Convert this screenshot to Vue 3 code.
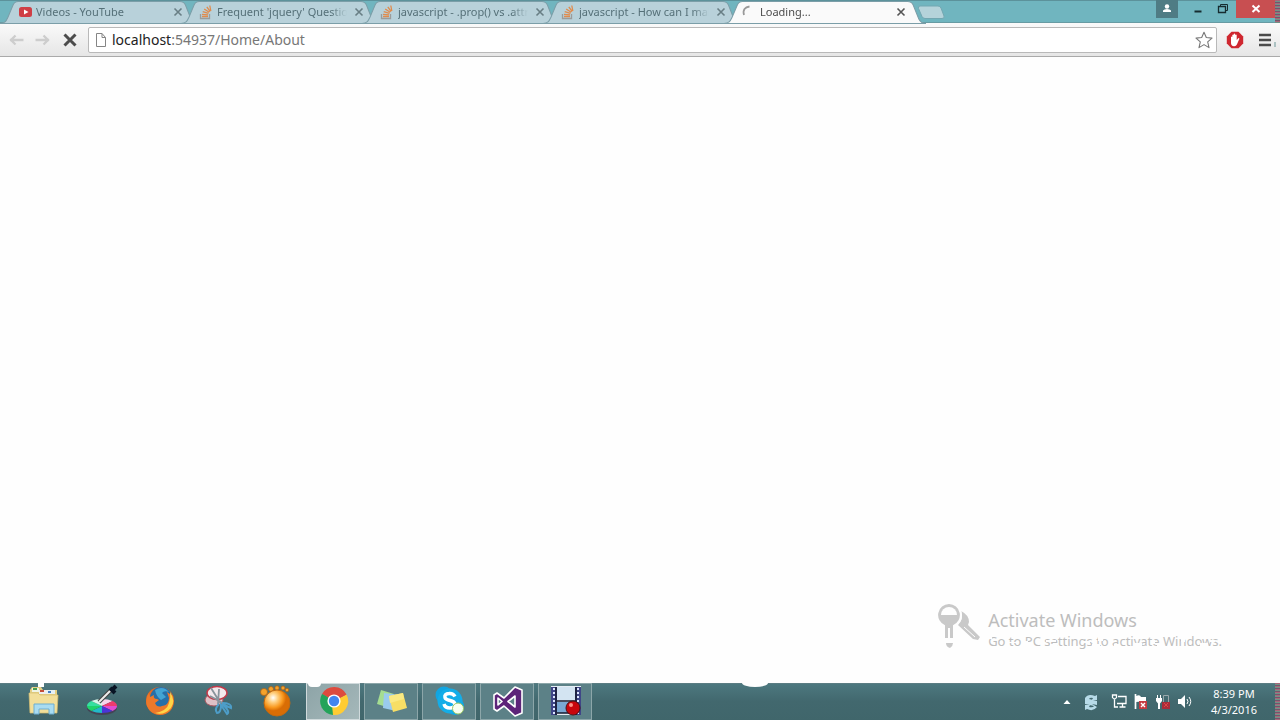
<script setup>
const tabs = [
  { title: 'Videos - YouTube', icon: 'youtube' },
  { title: "Frequent 'jquery' Question", icon: 'stack' },
  { title: 'javascript - .prop() vs .attr', icon: 'stack' },
  { title: 'javascript - How can I mal', icon: 'stack' },
  { title: 'Loading...', icon: 'spinner', active: true }
]
const colors = ['#f0f', '#00f', '#0af', '#0f8', '#6e0', '#fff', '#ffd0e0', '#f33']
const hues = ['#e04bd0', '#4a35d8', '#22b9c9', '#1fd36c', '#35e0a0', '#d8f7ea', '#f7d3ea', '#ee3b6d']
const wedges = colors.map((key, i) => {
  const a = (i * Math.PI) / 4
  const b = a + Math.PI / 4
  return { key, fill: hues[i], d: `M17 22L${17 + 15 * Math.cos(a)} ${22 + 7 * Math.sin(a)}A15 7 0 0 1 ${17 + 15 * Math.cos(b)} ${22 + 7 * Math.sin(b)}Z` }
})
</script>

<template>
  <div class="desktop">
    <header class="strip">
      <div class="tabs" role="tablist">
        <div v-for="t in tabs" :key="t.title" class="tab" :class="{ active: t.active }">
          <svg class="shape" viewBox="0 0 197 24" preserveAspectRatio="none" aria-hidden="true">
            <path d="M0 23.500C6 23 6 21 8 17L13 5Q14.500 1.500 18 1.500H179Q183 1.500 184.500 5L190 19Q192 23.500 197 23.500Z" />
          </svg>
          <button class="label" role="tab" :aria-selected="!!t.active">
            <svg v-if="t.icon === 'youtube'" width="16" height="16" viewBox="0 0 16 16">
              <rect x="2" y="3" width="13" height="10" rx="2.500" fill="#cf3f46" /><path d="M7 5.500v5L11.500 8z" fill="#fff" />
            </svg>
            <svg v-else-if="t.icon === 'stack'" width="16" height="16" viewBox="0 0 16 16" fill="none">
              <path d="M2.500 10v4.500h9V10" stroke="#9b9c9b" stroke-width="1.300" />
              <path d="M4 12.500h6M4 10.300l6 .6M4.700 7.700l5.800 1.600M6.200 5l5 3.200M8.800 2.800l3.400 4.700M11.800 1.500l1 5.500" stroke="#e08b4d" stroke-width="1.300" />
            </svg>
            <svg v-else width="16" height="16" viewBox="0 0 16 16" fill="none">
              <path d="M3 11C1.500 6 4 3 8.500 2.500" stroke="#999" stroke-width="1.800" />
            </svg>
            <span>{{ t.title }}</span>
          </button>
          <button class="close" aria-label="Close tab">
            <svg width="10" height="10" viewBox="0 0 10 10"><path d="M1.500 1.500l7 7M8.500 1.500l-7 7" /></svg>
          </button>
        </div>
        <button class="newtab" aria-label="New tab">
          <svg width="30" height="15" viewBox="0 0 30 15"><path d="M4 1h18q2 0 3 2l3 8q1 2.500-2 2.500H9q-2 0-3-2L2.500 3.500Q2 1 4 1z" fill="#b5d3da" stroke="#73a7b1" /></svg>
        </button>
      </div>
      <div class="window">
        <button class="user" aria-label="User">
          <svg width="22" height="17" viewBox="0 0 22 17" fill="#fff"><circle cx="11" cy="5.500" r="2.200" /><path d="M7 11V9.500Q8 8 11 8t4 1.500V11z" /></svg>
        </button>
        <button class="min" aria-label="Minimize"><svg width="10" height="17" viewBox="0 0 10 17"><path d="M1.500 10.500h7v2h-7z" fill="#172c30" /></svg></button>
        <button class="max" aria-label="Restore"><svg width="12" height="17" viewBox="0 0 12 17" fill="none" stroke="#172c30"><path d="M3.500 6V4.500h7v6H9" /><path d="M1.500 6.500h7v6h-7z" stroke-width="1.300" /></svg></button>
        <button class="exit" aria-label="Close"><svg width="10" height="10" viewBox="0 0 10 10"><path d="M1.500 1.500l7 6.500M8.500 1.500l-7 6.500" stroke="#fff" stroke-width="2" /></svg></button>
        <i class="edge"></i>
      </div>
    </header>

    <nav class="toolbar">
      <button aria-label="Back"><svg width="18" height="18" viewBox="0 0 18 18" fill="none" stroke="#cdcdcd" stroke-width="2.300"><path d="M16.500 9H3M8.500 4.500L4 9l4.500 4.500" /></svg></button>
      <button aria-label="Forward"><svg width="18" height="18" viewBox="0 0 18 18" fill="none" stroke="#cdcdcd" stroke-width="2.300"><path d="M1.500 9H15M9.500 4.500L14 9l-4.500 4.500" /></svg></button>
      <button aria-label="Stop"><svg width="18" height="18" viewBox="0 0 18 18" stroke="#4c4c4c" stroke-width="3"><path d="M3.500 3.500l11 11M14.500 3.500l-11 11" /></svg></button>
      <div class="address">
        <svg width="12" height="16" viewBox="0 0 12 16" fill="#fff" stroke="#858585"><path d="M1.500 1.500h5.500l3.500 4v9h-9zM7 1.500v4h3.500" /></svg>
        <a class="url" href="#"><b>localhost</b>:54937/Home/About</a>
        <button class="star" aria-label="Bookmark"><svg width="18" height="18" viewBox="0 0 18 18" fill="#fff" stroke="#777" stroke-width="1.100"><path d="M9 1.200l2.300 5.300 5.700.6-4.300 3.800 1.300 5.700L9 13.600l-5 3 1.300-5.700L1 7.100l5.700-.6z" stroke-linejoin="round" /></svg></button>
      </div>
      <button class="block" aria-label="Ad blocker"><svg width="18" height="18" viewBox="0 0 18 18"><path d="M5.500 .8h7l4.700 4.700v7l-4.700 4.700h-7L.8 12.500v-7z" fill="#cf2730" /><path d="M5 6q.8-1 1.300 0V4q.9-1 1.400 0V3q1-1 1.500 0v1q1-1 1.500 0v5l1.800-2q1.300 0 .7 1.300l-2.300 5.200q-1 2-3 1.700Q5 15 5 12z" fill="#fff" /></svg></button>
      <button class="menu" aria-label="Menu"><svg width="18" height="18" viewBox="0 0 18 18"><path d="M1 4h12M1 9h12M1 14h12" stroke="#4b4b4b" stroke-width="2.400" /><path d="M17 11v5" stroke="#6d9698" /></svg></button>
    </nav>

    <main class="page">
      <aside class="watermark">
        <svg width="44" height="48" viewBox="0 0 44 48" fill="#c9c9c9">
          <path d="M24 8q8 4 8 11l-1 3 12 12-2 3-5-1-15-14q6-6 3-14z" />
          <circle cx="12" cy="12" r="13" fill="#fefefe" />
          <path d="M12 1a11 11 0 0 1 4 21.200V35H13V25h-2v10H8V22.200A11 11 0 0 1 12 1z" />
          <path d="M4 12a8 8 0 0 1 16 0z" fill="#fefefe" />
          <path d="M27 24l11 10" stroke="#fefefe" />
          <path d="M9 40h7q0 3-3 5Q9 44 9 40z" />
        </svg>
        <div>
          <p class="big">Activate Windows</p>
          <p class="small">
            Go to PC settings to activate Windows.
            <svg class="wear" width="240" height="18" viewBox="0 0 240 18" fill="#fefefe" aria-hidden="true">
              <path d="M0 3h4v4H0zM20 10h10v1H20zM36 9h4v6h-4zM58 8h10v2H58zM62 12h7v2h-7zM95 9h7v2h-7zM104 12h8v3h-8zM110 5h5v4h-5zM121 8h4v3h-4zM126 12h5v3h-5zM146 11h8v4h-8zM163 8h4v4h-4zM169 12h5v3h-5zM193 4h4v6h-4zM212 11h8v3h-8zM222 8h5v2h-5z" />
            </svg>
          </p>
        </div>
      </aside>
    </main>

    <footer class="taskbar">
      <i class="notch n1"></i><i class="notch n2"></i><i class="notch n3"></i>
      <div class="apps">
        <button aria-label="File Explorer"><svg width="34" height="34" viewBox="0 0 34 34">
          <path d="M3 6l2-3h9l2 3h14v21H3z" fill="#e4cf83" /><path d="M5 4h7v4H5z" fill="#eef4e4" /><path d="M6 4h4v2H6z" fill="#4a9d4e" /><path d="M12 6h8v4h-8z" fill="#eee" /><path d="M13 6h4v2h-4z" fill="#c44d39" /><path d="M20 6h8v4h-8z" fill="#e6f0f5" /><path d="M21 7h3v2h-3z" fill="#477ec2" />
          <path d="M2 9h9l2 2h18l-1 18H3z" fill="#f2df9a" stroke="#d5bd70" stroke-width=".7" /><path d="M7 20h20v10h-5v-5H12v5H7z" fill="#a9dcf1" stroke="#6caed2" />
        </svg></button>
        <button aria-label="Color picker"><svg width="34" height="34" viewBox="0 0 34 34">
          <ellipse cx="17" cy="24" rx="15" ry="7" fill="#445" /><path v-for="w in wedges" :key="w.key" :d="w.d" :fill="w.fill" />
          <path d="M14 18L26 6" stroke="#444" stroke-width="4" /><path d="M14 18L26 6" stroke="#eee" stroke-width="2" /><path d="M25 4l5 5M27 6l4-4" stroke="#081424" stroke-width="4" />
        </svg></button>
        <button aria-label="Firefox"><svg width="34" height="34" viewBox="0 0 34 34">
          <circle cx="17" cy="17" r="14" fill="#e66a22" /><circle cx="18" cy="14" r="11" fill="#276fa8" /><path d="M12 6q8-5 14 2-5-2-7 1l4 4-5 3q-5-4-6-10z" fill="#43a4d4" />
          <path d="M30 13q2 13-8 17Q9 33 4 22q-2-7 2-13l1 4 4-2q-1 4 3 4l2 1-4 3q2 5 7 3 7-1 7-8l-2-6q5 3 6 5z" fill="#ed792a" /><path d="M27 8q6 9 1 16-7 8-16 5 12-2 14-10 2-6 1-11z" fill="#ffd447" />
        </svg></button>
        <button aria-label="Snipping Tool"><svg width="34" height="34" viewBox="0 0 34 34" fill="none">
          <ellipse cx="13" cy="16" rx="9" ry="6" fill="#dfc1c6" stroke="#ab5660" /><ellipse cx="16" cy="9" rx="10" ry="6.500" fill="#f2e9ec" stroke="#c23949" stroke-width="1.500" />
          <path d="M10 4l10 16M18 5l-1 15M9 12l13 7" stroke="#89949c" stroke-width="1.800" /><path d="M18 20q-5 5-2 9 4 0 4-8l6 9q4-2-5-10l9 4q1-5-9-5" stroke="#4d9dc8" stroke-width="2" />
        </svg></button>
        <button aria-label="GOM Player"><svg width="34" height="34" viewBox="0 0 34 34">
          <defs><radialGradient id="orange" cx=".35" cy=".3"><stop offset="0" stop-color="#fff" /><stop offset=".35" stop-color="#ffd184" /><stop offset=".75" stop-color="#f9981e" /><stop offset="1" stop-color="#d96d05" /></radialGradient></defs>
          <g fill="#f5a22b" stroke="#a65c12" stroke-width=".7"><circle cx="5" cy="8" r="3.500" /><circle cx="12" cy="5" r="2.500" /><circle cx="18" cy="4" r="2.200" /><circle cx="24" cy="4" r="2" /><circle cx="28" cy="6" r="1.800" /></g><circle cx="18" cy="19" r="13" fill="url(#orange)" stroke="#c26a10" />
        </svg></button>
        <button class="open current" aria-label="Chrome"><svg width="34" height="34" viewBox="0 0 34 34">
          <path d="M17 17L5 10A14 14 0 0 1 29.500 10.500z" fill="#dd4b3e" /><path d="M17 17L29.500 10.500A14 14 0 0 1 16 31z" fill="#fc3" /><path d="M17 17L16 31A14 14 0 0 1 5 10z" fill="#24a35a" /><path d="M17 10.500h12.500L17 17z" fill="#dd4b3e" /><path d="M5 10l6 10 6-3z" fill="#24a35a" /><path d="M22.500 20L16 31l-1-10z" fill="#fc3" /><circle cx="17" cy="17" r="6.600" fill="#fff" /><circle cx="17" cy="17" r="5.200" fill="#4385ef" />
        </svg></button>
        <button class="open" aria-label="Sticky Notes"><svg width="34" height="34" viewBox="0 0 34 34">
          <path d="M6 6l13 4-4 14-13-4z" fill="#a5dd91" /><path d="M9 9l15 2-3 16-13-3z" fill="#9acbed" /><path d="M14 12l14-3 4 15-14 4z" fill="#f7de65" /><path d="M14 12l14-3 1 6-14 4z" fill="#fae982" />
        </svg></button>
        <button class="open" aria-label="Skype"><svg width="34" height="34" viewBox="0 0 34 34">
          <circle cx="11" cy="11" r="8.500" fill="#12a5e1" /><circle cx="22" cy="22" r="9" fill="#12a5e1" /><circle cx="17" cy="17" r="12.500" fill="#14ade8" />
          <path d="M22 12.500Q20 9 16 9.500q-5 .5-4 4 .5 2 5 3t5 3.500q0 4-5 4-5 0-6-4" fill="none" stroke="#fff" stroke-width="3.500" /><circle cx="25" cy="24.500" r="5.500" fill="#f7fff1" stroke="#9ac765" />
        </svg></button>
        <button class="open" aria-label="Visual Studio"><svg width="34" height="34" viewBox="0 0 34 34">
          <path fill-rule="evenodd" d="M24 3l7 3v23l-7 3-11-10-7 5-3-2V11l3-2 7 5zM24 12l-7 5.500 7 5.500zM7 14v7l4-3.500z" fill="#5d2479" stroke="#fff" stroke-width="1.600" stroke-linejoin="round" />
        </svg></button>
        <button class="open" aria-label="Screen recorder"><svg width="34" height="34" viewBox="0 0 34 34">
          <path d="M2 2h30v29H2z" fill="#e5edf4" /><path d="M2 3h6v28H2zM26 3h6v28h-6z" fill="#3f4687" /><path d="M5 4v26M29 4v26" stroke="#dce5ff" stroke-width="2" stroke-dasharray="2 2" /><path d="M8 3h18v13H8z" fill="#d3e4f2" /><path d="M8 18h18v11H8z" fill="#7aa8d3" /><path d="M7 3v28M27 3v28M8 17h18M8 29h16" stroke="#15192e" stroke-width="1.500" /><circle cx="24" cy="24" r="7" fill="#c9060d" stroke="#4d1115" /><circle cx="22" cy="21" r="2" fill="#ff8f83" />
        </svg></button>
      </div>
      <div class="tray">
        <button class="up" aria-label="Show hidden icons"><svg width="8" height="6" viewBox="0 0 8 6"><path d="M4 1l3.500 4h-7z" fill="#fff" /></svg></button>
        <svg class="sync" width="16" height="18" viewBox="0 0 16 18"><path d="M2 5q3-5 10-2l2-1v5H9l1-2q-3-1-4 1l8 2v4L9 11l5 3q-4 5-10 2l-2 1v-5h5l-1 2q4 1 5-1L2 11z" fill="#b7dbe8" /></svg>
        <svg class="net" width="17" height="17" viewBox="0 0 17 17" fill="none" stroke="#fff" stroke-width="1.300"><path d="M7 3.500h8v7H6M8.500 14h6M11.500 11v3M3.500 6v8H7M1.500 2v2.500q2 3 4 0V2z" /></svg>
        <svg class="flag" width="17" height="17" viewBox="0 0 17 17"><path d="M2.500 1v15" stroke="#fff" stroke-width="1.700" /><path d="M3 3q4-2 5 1h5v6H8Q7 8 3 9z" fill="#fff" /><path d="M6 8h8v8H6z" fill="#c63a42" /><path d="M8 10l4 4m0-4l-4 4" stroke="#fff" stroke-width="1.400" /></svg>
        <svg class="power" width="17" height="17" viewBox="0 0 17 17"><path d="M8.500 2.500h5v12h-5z" fill="none" stroke="#9aa8ac" /><path d="M1 5h6v3L5 10.500V16H3v-5.500L1 8z" fill="#fff" /><path d="M2.500 2v3M5.500 2v3" stroke="#fff" /><path d="M7 9h8v7H7z" fill="#a72d3a" /><path d="M9 10l4 4m0-4l-4 4" stroke="#d44" /></svg>
        <svg class="vol" width="17" height="17" viewBox="0 0 17 17"><path d="M1 6h3l4-4v13l-4-4H1z" fill="#fff" /><path d="M10 6q2 2.500 0 5M12 4q3.500 4.500 0 9" fill="none" stroke="#fff" /></svg>
        <time class="clock" datetime="2016-04-03T20:39"><span>8:39 PM</span><span>4/3/2016</span></time>
        <i class="edge"></i>
      </div>
    </footer>
  </div>
</template>

<style>
html, body { margin: 0; }
</style>

<style scoped>
.desktop { min-height: 100vh; display: flex; flex-direction: column; background: #fefefe; font-family: "Noto Sans", "Open Sans", sans-serif; }
button { border: 0; padding: 0; margin: 0; background: none; font: inherit; color: inherit; display: flex; align-items: center; justify-content: center; }
svg { display: block; flex: none; }
.strip { height: 23px; display: flex; justify-content: space-between; background: #70b5bf; box-shadow: inset 0 1px #5c929b, inset 0 -1px #689ba3; }
.tabs { flex: 1; display: flex; min-width: 0; }
.tab { position: relative; flex: 0 1 181px; min-width: 0; display: flex; align-items: center; padding-left: 17px; box-sizing: border-box; font-size: 11px; color: #557078; }
.shape { position: absolute; left: 0; top: 0; width: calc(100% + 17px); height: 24px; z-index: 0; }
.shape path { fill: #b8d1da; stroke: #7b9ea8; }
.tab.active { color: #4c4c4c; flex-basis: 185px; padding-right: 3px; }
.tab.active .shape { z-index: 1; }
.tab.active .shape path { fill: #fafafa; }
.label { position: relative; z-index: 2; flex: 1; min-width: 0; justify-content: flex-start; gap: 3px; height: 22px; }
.label span { flex: 1; text-align: left; white-space: nowrap; overflow: hidden; mask-image: linear-gradient(to right, #000 calc(100% - 16px), transparent); }
.close { position: relative; z-index: 2; width: 10px; margin-left: 7px; margin-right: -2px; margin-top: 1px; }
.active .close { margin-right: 0; }
.close path { stroke: #687e85; stroke-width: 1.600; }
.active .close path { stroke: #555; }
.newtab { margin-left: 7px; padding-top: 2px; }
.window { display: flex; align-items: flex-start; }
.user { width: 22px; height: 18px; background: #4f7c84; margin-right: 15px; }
.min { width: 10px; margin-right: 14px; }
.max { width: 12px; margin-right: 7px; }
.exit { width: 40px; height: 18px; background: #c84f51; }
.window .edge { margin-left: -1px; }
.edge { width: 5px; align-self: stretch; background: repeating-linear-gradient(#a6667a 0 1px, #6f9386 1px 2px, #73566c 2px 3px); }
.toolbar { height: 34px; box-sizing: border-box; display: flex; align-items: center; gap: 9px; padding: 0 4px 0 7px; background: linear-gradient(#fafafa, #e6e6e6); border-bottom: 1px solid #aaa; }
.address { flex: 1; height: 26px; box-sizing: border-box; border: 1px solid #b9b9b9; border-radius: 2px; background: #fff; display: flex; align-items: center; padding: 0 3px 0 6px; }
.url { flex: 1; margin-left: 5px; color: #777; font-size: 14px; line-height: 20px; text-decoration: none; }
.url b { color: #222; font-weight: 400; }
.menu { margin-left: 5px; }
.page { flex: 1; display: flex; justify-content: flex-end; align-items: flex-end; padding: 0 58px 32px 0; }
.watermark { display: flex; gap: 7px; color: #bdbdbd; }
.watermark p { margin: 0; white-space: nowrap; }
.big { font-size: 18px; line-height: 24px; padding-top: 5px; }
.small { position: relative; font-size: 13px; line-height: 18px; }
.wear { position: absolute; left: 0; top: 0; }
.taskbar { position: relative; height: 37px; display: flex; justify-content: space-between; background: linear-gradient(#4d7980, #42686e 50%, #40666b); box-shadow: inset 0 1px #5b7d83; }
.apps { display: flex; gap: 4px; padding-left: 16px; }
.apps button { width: 54px; height: 37px; box-sizing: border-box; padding: 0 0 2px 1px; }
.apps .open { border: 1px solid #8ca6a9; background: #5c8187; }
.apps .current { background: linear-gradient(135deg, #8da4a7, #a5b8ba); border-color: #d0dadc; }
.notch { position: absolute; top: 0; background: #fefefe; z-index: 1; }
.n1 { left: 38px; width: 6px; height: 4px; }
.n2 { left: 308px; width: 13px; height: 4px; border-radius: 0 0 7px 7px; }
.n3 { left: 742px; width: 26px; height: 4px; border-radius: 0 0 13px 13px / 0 0 4px 4px; }
.tray { display: flex; align-items: center; }
.up { width: 8px; margin-right: 12px; }
.sync { margin-right: 12px; }
.net, .flag, .power { margin-right: 5px; }
.clock { display: flex; flex-direction: column; align-items: center; width: 54px; margin: 0 14px 0 13px; color: #fff; font-size: 11px; line-height: 16px; white-space: nowrap; }
</style>
